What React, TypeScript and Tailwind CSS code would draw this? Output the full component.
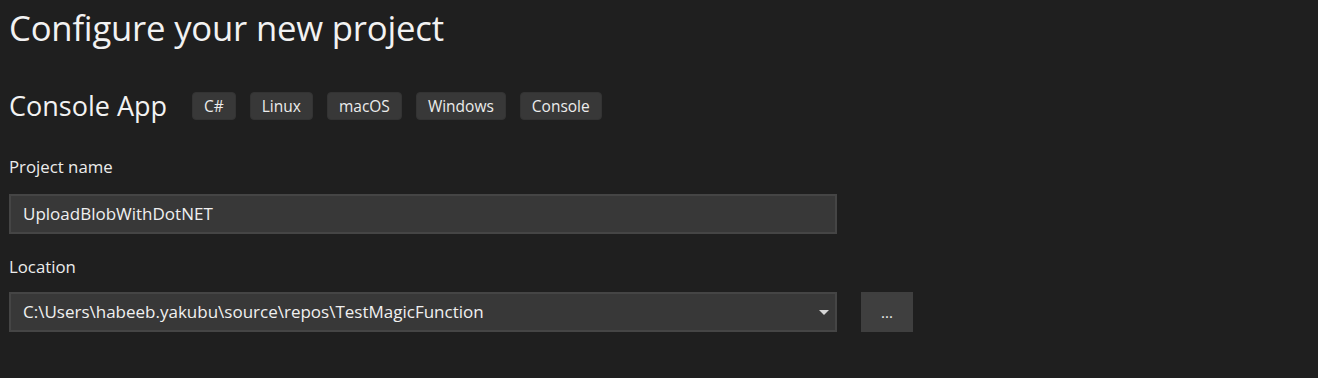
import React from "react";

const tags = ["C#", "Linux", "macOS", "Windows", "Console"];

const App = () => {
  return (
    <div
      className="w-[1318px] h-[378px] bg-[#1f1f1f] text-[#f2f2f2] pl-[9px] overflow-hidden"
      style={{ fontFamily: '"Open Sans", "Noto Sans", sans-serif' }}
    >
      {/* Title */}
      <h1 className="h-[56px] leading-[56px] text-[34.7px] font-normal tracking-[-0.2px]">
        Configure your new project
      </h1>

      {/* Template + tags */}
      <div className="mt-[36px] h-[28px] flex items-center">
        <div className="text-[27px] leading-[28px] w-[183px]">Console App</div>
        <div className="flex gap-[14px]">
          {tags.map((tag) => (
            <span
              key={tag}
              className="h-[28px] px-[11px] pt-[2px] flex items-center rounded-[4px] bg-[#383838] border border-[#333333] text-[15.5px] text-[#ececec]"
            >
              {tag}
            </span>
          ))}
        </div>
      </div>

      {/* Project name */}
      <div className="mt-[37px] h-[20px] leading-[20px] text-[16.8px] text-[#ececec]">
        Project name
      </div>
      <div className="mt-[17px] w-[828px] h-[40px] bg-[#383838] border-2 border-[#454545] flex items-center pl-[12px] text-[17px] text-[#f0f0f0]">
        UploadBlobWithDotNET
      </div>

      {/* Location */}
      <div className="mt-[23px] h-[20px] leading-[20px] text-[16.8px] text-[#ececec]">
        Location
      </div>
      <div className="mt-[15px] flex gap-[24px]">
        <div className="w-[828px] h-[40px] bg-[#383838] border-2 border-[#454545] flex items-center pl-[12px] pr-[5px] text-[17px] text-[#f0f0f0]">
          <span className="flex-1">
            C:\Users\habeeb.yakubu\source\repos\TestMagicFunction
          </span>
          <svg width="10" height="5" viewBox="0 0 10 5" className="mr-[1px]">
            <path d="M0 0 L10 0 L5 5 Z" fill="#d6d6d6" />
          </svg>
        </div>
        <button className="w-[52px] h-[40px] bg-[#3f3f3f] text-[15px] text-[#f0f0f0] flex items-center justify-center">
          ...
        </button>
      </div>
    </div>
  );
};

export default App;
